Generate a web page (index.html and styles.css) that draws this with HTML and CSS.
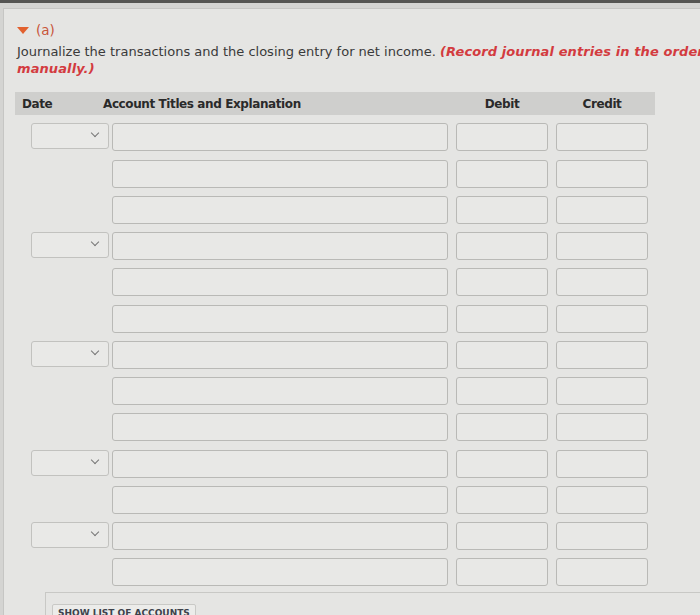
FILE: index.html
```html
<!DOCTYPE html>
<html lang="en">
<head>
    <meta charset="UTF-8">
    <meta name="viewport" content="width=device-width, initial-scale=1.0">
    <title>Journal Entries</title>
    <link rel="stylesheet" href="styles.css">
</head>
<body>
    <div class="topbar"></div>
    <div class="screen">
        <div class="panel">
            <h2 class="part"><span class="arrow"></span>(a)</h2>
            <p class="prompt">Journalize the transactions and the closing entry for net income. <em>(Record journal entries in the order presented in the problem. Credit account titles are automatically indented when amount is entered. Do not indent</em><br><em>manually.)</em></p>

            <div class="journal">
                <div class="head">
                    <div class="col-date">Date</div>
                    <div class="col-acct">Account Titles and Explanation</div>
                    <div class="col-amt">Debit</div>
                    <div class="col-amt">Credit</div>
                </div>

                <div class="row">
                    <div class="col-date"><div class="select"><span class="chev"></span></div></div>
                    <div class="col-acct"><div class="box"></div></div>
                    <div class="col-amt"><div class="box"></div></div>
                    <div class="col-amt"><div class="box"></div></div>
                </div>
                <div class="row">
                    <div class="col-date"></div>
                    <div class="col-acct"><div class="box"></div></div>
                    <div class="col-amt"><div class="box"></div></div>
                    <div class="col-amt"><div class="box"></div></div>
                </div>
                <div class="row">
                    <div class="col-date"></div>
                    <div class="col-acct"><div class="box"></div></div>
                    <div class="col-amt"><div class="box"></div></div>
                    <div class="col-amt"><div class="box"></div></div>
                </div>

                <div class="row">
                    <div class="col-date"><div class="select"><span class="chev"></span></div></div>
                    <div class="col-acct"><div class="box"></div></div>
                    <div class="col-amt"><div class="box"></div></div>
                    <div class="col-amt"><div class="box"></div></div>
                </div>
                <div class="row">
                    <div class="col-date"></div>
                    <div class="col-acct"><div class="box"></div></div>
                    <div class="col-amt"><div class="box"></div></div>
                    <div class="col-amt"><div class="box"></div></div>
                </div>
                <div class="row">
                    <div class="col-date"></div>
                    <div class="col-acct"><div class="box"></div></div>
                    <div class="col-amt"><div class="box"></div></div>
                    <div class="col-amt"><div class="box"></div></div>
                </div>

                <div class="row">
                    <div class="col-date"><div class="select"><span class="chev"></span></div></div>
                    <div class="col-acct"><div class="box"></div></div>
                    <div class="col-amt"><div class="box"></div></div>
                    <div class="col-amt"><div class="box"></div></div>
                </div>
                <div class="row">
                    <div class="col-date"></div>
                    <div class="col-acct"><div class="box"></div></div>
                    <div class="col-amt"><div class="box"></div></div>
                    <div class="col-amt"><div class="box"></div></div>
                </div>
                <div class="row">
                    <div class="col-date"></div>
                    <div class="col-acct"><div class="box"></div></div>
                    <div class="col-amt"><div class="box"></div></div>
                    <div class="col-amt"><div class="box"></div></div>
                </div>

                <div class="row">
                    <div class="col-date"><div class="select"><span class="chev"></span></div></div>
                    <div class="col-acct"><div class="box"></div></div>
                    <div class="col-amt"><div class="box"></div></div>
                    <div class="col-amt"><div class="box"></div></div>
                </div>
                <div class="row">
                    <div class="col-date"></div>
                    <div class="col-acct"><div class="box"></div></div>
                    <div class="col-amt"><div class="box"></div></div>
                    <div class="col-amt"><div class="box"></div></div>
                </div>

                <div class="row">
                    <div class="col-date"><div class="select"><span class="chev"></span></div></div>
                    <div class="col-acct"><div class="box"></div></div>
                    <div class="col-amt"><div class="box"></div></div>
                    <div class="col-amt"><div class="box"></div></div>
                </div>
                <div class="row">
                    <div class="col-date"></div>
                    <div class="col-acct"><div class="box"></div></div>
                    <div class="col-amt"><div class="box"></div></div>
                    <div class="col-amt"><div class="box"></div></div>
                </div>
            </div>

            <div class="footer">
                <button class="btn">SHOW LIST OF ACCOUNTS</button>
            </div>
        </div>
    </div>
</body>
</html>
```

FILE: styles.css
```css
body {
    margin: 0;
    background-color: #d4d4d2;
    font-family: "DejaVu Sans", Verdana, sans-serif;
    overflow: hidden;
}
.topbar {
    height: 3px;
    background-color: #555553;
}
.screen {
    margin-top: 5px;
    margin-left: 3px;
    height: 620px;
    background-color: #e5e5e3;
    border-top: 1px solid #c6c6c4;
    border-left: 1px solid #c6c6c4;
    overflow: hidden;
}
.panel {
    padding: 12px 0 0 11px;
}
.part {
    margin: 0;
    font-size: 13.5px;
    line-height: 18px;
    font-weight: normal;
    color: #c8553a;
    display: flex;
    align-items: center;
    gap: 7px;
    padding-left: 2px;
}
.arrow {
    width: 0;
    height: 0;
    border-left: 6px solid transparent;
    border-right: 6px solid transparent;
    border-top: 7px solid #e2612f;
}
.prompt {
    margin: 4px 0 0;
    padding-left: 2px;
    font-size: 13px;
    line-height: 17px;
    color: #3a3a3a;
    white-space: nowrap;
}
.prompt em {
    color: #d33b3f;
    font-weight: bold;
    letter-spacing: 0.1px;
}
.journal {
    margin-top: 15px;
    width: 640px;
}
.head {
    display: flex;
    align-items: center;
    height: 23px;
    background-color: #cfcfcd;
    font-size: 12px;
    font-weight: bold;
    color: #2a2a2a;
    letter-spacing: -0.4px;
}
.head .col-date {
    padding-left: 7px;
    box-sizing: border-box;
}
.head .col-acct {
    margin-left: -9px;
    width: 345px;
}
.head .col-amt {
    text-align: center;
}
.col-date {
    width: 97px;
    flex: none;
}
.col-acct {
    width: 336px;
    flex: none;
}
.col-amt {
    width: 92px;
    flex: none;
    margin-left: 8px;
}
.row {
    display: flex;
    height: 28px;
    margin-top: 8.25px;
}
.box {
    height: 26px;
    border: 1px solid #b9b9b6;
    border-radius: 3px;
    background-color: #e8e8e6;
}
.select {
    position: relative;
    width: 76px;
    height: 24px;
    margin-left: 16px;
    border: 1px solid #c2c2bf;
    border-radius: 3px;
    background-color: #e9e9e7;
}
.chev {
    position: absolute;
    right: 10px;
    top: 6px;
    width: 5px;
    height: 5px;
    border-right: 1.5px solid #777;
    border-bottom: 1.5px solid #777;
    transform: rotate(45deg);
}
.footer {
    margin-top: 6px;
    margin-left: 30px;
    border-top: 1px solid #c8c8c5;
    border-left: 1px solid #c8c8c5;
    padding: 8px 0 0 6px;
}
.btn {
    font-family: "DejaVu Sans", Verdana, sans-serif;
    font-size: 9px;
    font-weight: bold;
    color: #3e424c;
    background-color: #ececea;
    border: 1px solid #c9c9c6;
    border-radius: 2px;
    padding: 3px 5px;
}
```
